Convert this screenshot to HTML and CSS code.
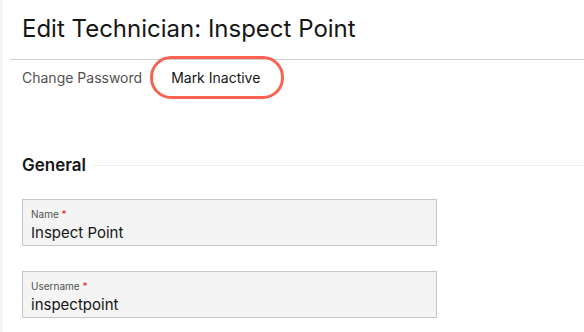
FILE: index.html
```html
<!DOCTYPE html>
<html lang="en">
<head>
    <meta charset="UTF-8">
    <title>Edit Technician</title>
    <link rel="stylesheet" href="styles.css">
</head>
<body>
    <div class="page">
        <h1 class="title">Edit Technician: Inspect Point</h1>

        <div class="actions">
            <a href="#" class="action-link">Change Password</a>
            <a href="#" class="action-link active">Mark Inactive</a>
        </div>

        <div class="section">
            <div class="section-head">
                <h2>General</h2>
                <span class="rule"></span>
            </div>

            <div class="field">
                <label>Name <span class="req">*</span></label>
                <input type="text" value="Inspect Point">
            </div>

            <div class="field">
                <label>Username <span class="req">*</span></label>
                <input type="text" value="inspectpoint">
            </div>
        </div>
    </div>
</body>
</html>
```

FILE: styles.css
```css
body {
    margin: 0;
    font-family: 'Inter', 'Noto Sans', sans-serif;
    background: #fff;
    color: #161616;
}

.page {
    border-left: 3px solid #f4f4f4;
    min-height: 332px;
    box-sizing: border-box;
    padding-left: 7px;
}

.title {
    font-size: 24px;
    font-weight: 400;
    margin: 0;
    padding: 13px 0 15px 12px;
    border-bottom: 1px solid #cfcfcf;
    line-height: 31px;
}

.actions {
    display: flex;
    align-items: center;
    padding: 0 0 0 12px;
    height: 35px;
}

.action-link {
    font-size: 14px;
    color: #525252;
    text-decoration: none;
    margin-right: 29px;
    line-height: 17px;
}

/* highlighted entry, circled in red */
.action-link.active {
    color: #161616;
    position: relative;
    display: inline-block;
}

.action-link.active::after {
    content: "";
    position: absolute;
    left: -21px;
    right: -24px;
    top: -13px;
    bottom: -13px;
    border: 3px solid #fa6252;
    border-radius: 21px;
}

.section {
    padding: 60px 0 0 12px;
}

.section-head {
    display: flex;
    align-items: center;
    margin-bottom: 24px;
}

.section-head h2 {
    font-size: 17px;
    font-weight: 600;
    margin: 0;
    line-height: 20px;
}

.rule {
    flex: 1;
    height: 1px;
    background: #ececec;
    margin-left: 7px;
}

.field {
    width: 415px;
    box-sizing: border-box;
    background: #f4f4f4;
    border: 1px solid #c6c6c6;
    padding: 7px 8px 1px;
    margin-bottom: 25px;
}

.field label {
    display: block;
    font-size: 10px;
    color: #525252;
    line-height: 14px;
    margin-bottom: 1px;
}

.req {
    color: #da1e28;
}

.field input {
    border: none;
    background: transparent;
    padding: 0;
    font-family: inherit;
    font-size: 15px;
    color: #161616;
    width: 100%;
    line-height: 22px;
    height: 22px;
    outline: none;
}
```
